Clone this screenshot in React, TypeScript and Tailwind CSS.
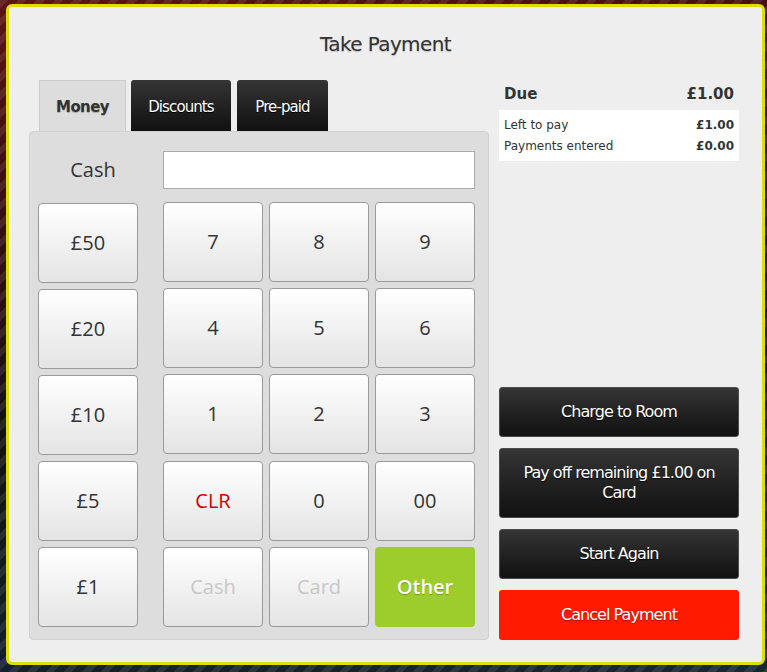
import React from 'react';

/* --- Keypad pieces --- */

const keyBase =
  'h-[80px] rounded-[4px] border border-[#9a9a9a] bg-gradient-to-b from-white to-[#e4e4e4] flex items-center justify-center text-[20px] font-["Open_Sans",sans-serif]';

const Key = ({ label, tone = 'normal' }: { label: string; tone?: 'normal' | 'red' | 'off' }) => {
  const color = tone === 'red' ? 'text-[#d40000]' : tone === 'off' ? 'text-[#c8c8c8]' : 'text-[#333333]';
  return <div className={`${keyBase} ${color}`}>{label}</div>;
};

const DarkButton = ({ children, className = '' }: { children: React.ReactNode; className?: string }) => (
  <div
    className={`w-full rounded-[3px] border border-[#4a4a4a] bg-gradient-to-b from-[#353535] to-[#111111] text-white text-[16px] leading-[20px] text-center flex items-center justify-center px-3 [text-shadow:0_1px_1px_#000] font-['DejaVu_Sans',sans-serif] tracking-[-0.06em] ${className}`}
  >
    {children}
  </div>
);

const Tab = ({ label, active }: { label: string; active?: boolean }) =>
  active ? (
    <div className="h-[51px] w-[87px] pt-[3px] bg-[#dddddd] border border-[#cccccc] border-b-0 flex items-center justify-center font-bold text-[15px] text-[#333333] [text-shadow:0_1px_1px_#aaa] font-['DejaVu_Sans',sans-serif] tracking-[-0.04em]">
      {label}
    </div>
  ) : (
    <div className="h-[51px] pt-[4px] rounded-t-[3px] bg-gradient-to-b from-[#353535] to-[#111111] flex items-center justify-center text-white text-[15px] px-[14px] font-['DejaVu_Sans',sans-serif] tracking-[-0.06em] [text-shadow:0_1px_1px_#000]">
      {label}
    </div>
  );

/* --- Main --- */

export default function App() {
  const cashKeys = ['£50', '£20', '£10', '£5', '£1'];

  return (
    <div className="w-[767px] h-[672px] overflow-hidden pt-[4px] pl-[6px] bg-[image:repeating-linear-gradient(135deg,rgba(255,255,255,0.09)_0px,rgba(255,255,255,0.09)_6px,transparent_6px,transparent_13px),linear-gradient(170deg,#5a1414_0%,#3a0e0e_25%,#121212_55%,#16263d_100%)]">
      <div className="w-[759px] h-[661px] border-[3px] border-[#dede00] rounded-[6px] bg-[#eeeeee] flex flex-col">
        {/* Title */}
        <div className="h-[73px] flex items-center justify-center text-[20px] text-[#333333] font-['DejaVu_Sans',sans-serif] tracking-[-0.03em] [text-shadow:0_1px_1px_#bbb]">
          Take Payment
        </div>

        <div className="flex pl-[20px] gap-[10px]">
          {/* Left side */}
          <div className="w-[460px] flex flex-col">
            <div className="flex pl-[10px] gap-[5px]">
              <Tab label="Money" active />
              <div className="w-[100px]">
                <Tab label="Discounts" />
              </div>
              <div className="w-[91px] ml-[1px]">
                <Tab label="Pre-paid" />
              </div>
            </div>

            <div className="h-[509px] bg-[#dddddd] border border-[#d2d2d2] rounded-[4px] pt-[19px] pl-[8px] pr-[13px]">
              <div className="flex items-center h-[38px]">
                <div className="w-[110px] text-center text-[20px] text-[#333333] font-['Open_Sans',sans-serif]">Cash</div>
                <div className="flex-1 ml-[15px] h-[38px] bg-white border border-[#aaaaaa]" />
              </div>

              <div className="flex mt-[13px] gap-[25px]">
                <div className="w-[100px] flex flex-col gap-[6px] pt-[1px]">
                  {cashKeys.map((k) => (
                    <Key key={k} label={k} />
                  ))}
                </div>
                <div className="flex-1 grid grid-cols-3 gap-[6px]">
                  {['7', '8', '9', '4', '5', '6', '1', '2', '3'].map((k) => (
                    <Key key={k} label={k} />
                  ))}
                  <Key label="CLR" tone="red" />
                  <Key label="0" />
                  <Key label="00" />
                  <Key label="Cash" tone="off" />
                  <Key label="Card" tone="off" />
                  <div className="h-[80px] rounded-[4px] bg-[#9ccd2b] flex items-center justify-center text-[20px] text-white font-semibold font-['Open_Sans',sans-serif] [text-shadow:0_1px_1px_rgba(0,0,0,0.25)]">
                    Other
                  </div>
                </div>
              </div>
            </div>
          </div>

          {/* Right side */}
          <div className="w-[240px] h-[560px] flex flex-col font-['DejaVu_Sans',sans-serif]">
            <div className="h-[27px] flex items-center justify-between px-[5px] mt-[1px] font-bold text-[15px] text-[#333333]">
              <span>Due</span>
              <span>£1.00</span>
            </div>
            <div className="mt-[2px] bg-white h-[51px] px-[5px] flex flex-col justify-center gap-[7px] text-[12px] text-[#333333] leading-[14px]">
              <div className="flex justify-between">
                <span>Left to pay</span>
                <span className="font-bold">£1.00</span>
              </div>
              <div className="flex justify-between">
                <span>Payments entered</span>
                <span className="font-bold">£0.00</span>
              </div>
            </div>

            <div className="mt-auto flex flex-col gap-[11px]">
              <DarkButton className="h-[50px]">Charge to Room</DarkButton>
              <DarkButton className="h-[70px]">Pay off remaining £1.00 on Card</DarkButton>
              <DarkButton className="h-[50px]">Start Again</DarkButton>
              <div className="h-[50px] rounded-[3px] bg-[#ff1a00] flex items-center justify-center text-white text-[16px] font-['DejaVu_Sans',sans-serif] tracking-[-0.06em] [text-shadow:0_1px_1px_rgba(0,0,0,0.4)]">
                Cancel Payment
              </div>
            </div>
          </div>
        </div>
      </div>
    </div>
  );
}
